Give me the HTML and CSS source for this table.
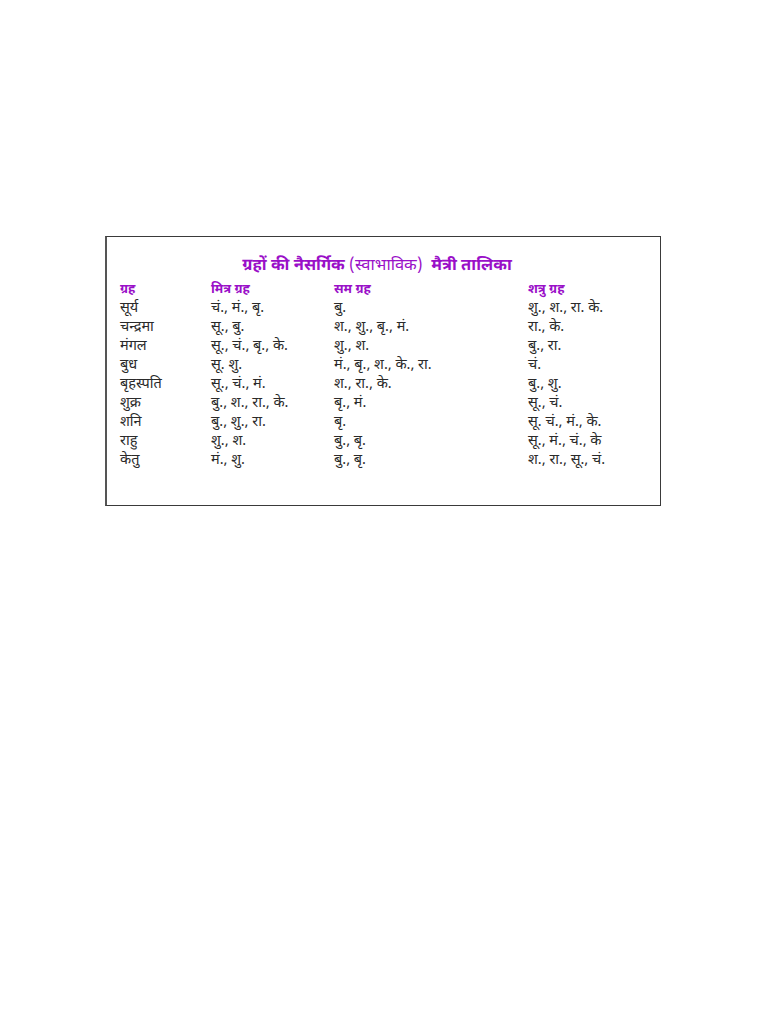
FILE: index.html
```html
<!DOCTYPE html>
<html lang="hi">
<head>
<meta charset="utf-8">
<title>ग्रहों की नैसर्गिक मैत्री तालिका</title>
<link rel="stylesheet" href="styles.css">
</head>
<body>
<div class="page">
  <div class="box">
    <div class="title"><b>ग्रहों की नैसर्गिक</b> <span class="paren">(स्वाभाविक)</span>&nbsp; <b>मैत्री तालिका</b></div>
    <div class="table">
      <div class="head">ग्रह</div><div class="head">मित्र ग्रह</div><div class="head">सम ग्रह</div><div class="head">शत्रु ग्रह</div>
      <div>सूर्य</div><div>चं., मं., बृ.</div><div>बु.</div><div>शु., श., रा. के.</div>
      <div>चन्द्रमा</div><div>सू., बु.</div><div>श., शु., बृ., मं.</div><div>रा., के.</div>
      <div>मंगल</div><div>सू., चं., बृ., के.</div><div>शु., श.</div><div>बु., रा.</div>
      <div>बुध</div><div>सू. शु.</div><div>मं., बृ., श., के., रा.</div><div>चं.</div>
      <div>बृहस्पति</div><div>सू., चं., मं.</div><div>श., रा., के.</div><div>बु., शु.</div>
      <div>शुक्र</div><div>बु., श., रा., के.</div><div>बृ., मं.</div><div>सू., चं.</div>
      <div>शनि</div><div>बु., शु., रा.</div><div>बृ.</div><div>सू. चं., मं., के.</div>
      <div>राहु</div><div>शु., श.</div><div>बु., बृ.</div><div>सू., मं., चं., के</div>
      <div>केतु</div><div>मं., शु.</div><div>बु., बृ.</div><div>श., रा., सू., चं.</div>
    </div>
  </div>
</div>
</body>
</html>
```
FILE: styles.css
```css
html, body {
  margin: 0;
  padding: 0;
  background: #ffffff;
}
body {
  font-family: "Noto Sans Devanagari", "Noto Serif Devanagari", "Lohit Devanagari", "FreeSerif", "Noto Sans", serif;
  color: #2a2a2a;
}
.page {
  padding-top: 236px;
  padding-left: 105px;
}
.box {
  box-sizing: border-box;
  width: 556px;
  height: 270px;
  border: 1px solid #3a3a3a;
  border-left: 2px solid #555555;
  padding: 15px 0 0 13px;
}
.title {
  text-align: center;
  color: #9a10c8;
  font-size: 16.5px;
  line-height: 28px;
  padding-right: 26px;
}
.title b {
  font-weight: 700;
}
.paren {
  font-weight: 400;
}
.table {
  display: grid;
  grid-template-columns: 91px 123px 194px 1fr;
  font-size: 14.5px;
  line-height: 19px;
}
.head {
  color: #9a10c8;
  font-weight: 700;
  font-size: 13px;
}
```
